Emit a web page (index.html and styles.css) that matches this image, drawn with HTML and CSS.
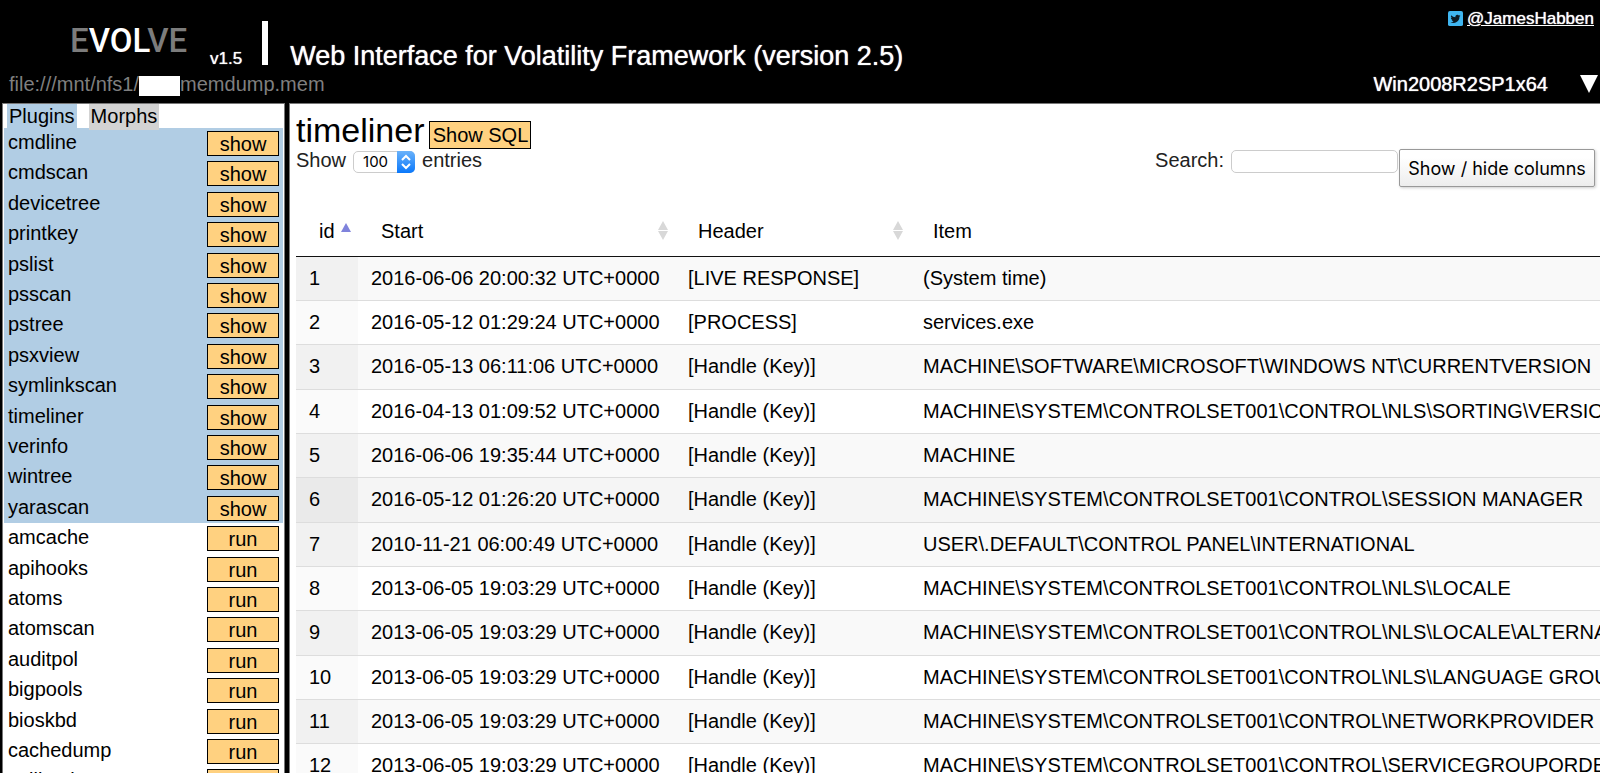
FILE: index.html
```
<!DOCTYPE html>
<html lang="en">
<head>
<meta charset="utf-8">
<title>Evolve</title>
<link rel="stylesheet" href="styles.css">
</head>
<body>
<header class="masthead">
  <div class="brand-row">
    <span class="logo"><span class="logo-dim">E</span>VOL<span class="logo-dim">VE</span></span>
    <span class="version">v1.5</span>
    <span class="divider"></span>
    <h1 class="tagline">Web Interface for Volatility Framework (version 2.5)</h1>
    <a class="author" href="#">
      <svg class="bird" viewBox="0 0 24 24" aria-hidden="true"><rect width="24" height="24" rx="3" fill="#3fb5f0"/><path fill="#0b1a24" d="M20 7.5a6.600 6.600 0 0 1-1.900.5 3.300 3.300 0 0 0 1.400-1.800 6.600 6.600 0 0 1-2.100.8 3.280 3.280 0 0 0-5.600 3A9.300 9.300 0 0 1 5.100 6.600a3.280 3.280 0 0 0 1 4.400 3.300 3.300 0 0 1-1.500-.4c0 1.600 1.100 3 2.600 3.300a3.300 3.300 0 0 1-1.500 0 3.300 3.300 0 0 0 3.100 2.300A6.600 6.600 0 0 1 4 17.500a9.300 9.300 0 0 0 14.300-8.300A6.600 6.600 0 0 0 20 7.500z"/></svg>
      <span class="handle">@JamesHabben</span>
    </a>
  </div>
  <div class="file-row">
    <span class="path">file:///mnt/nfs1/<span class="redacted"></span>memdump.mem</span>
    <button class="profile" type="button">Win2008R2SP1x64
      <svg class="caret" viewBox="0 0 18 18" aria-hidden="true"><path fill="#fff" d="M0 0h18L9 18z"/></svg>
    </button>
  </div>
</header>
<div class="workspace">
  <nav class="sidebar">
    <div class="tabs">
      <button class="tab tab-active" type="button">Plugins</button>
      <button class="tab" type="button">Morphs</button>
    </div>
    <ul class="plugins">
      <li class="plugin done"><span>cmdline</span><button class="action" type="button">show</button></li>
      <li class="plugin done"><span>cmdscan</span><button class="action" type="button">show</button></li>
      <li class="plugin done"><span>devicetree</span><button class="action" type="button">show</button></li>
      <li class="plugin done"><span>printkey</span><button class="action" type="button">show</button></li>
      <li class="plugin done"><span>pslist</span><button class="action" type="button">show</button></li>
      <li class="plugin done"><span>psscan</span><button class="action" type="button">show</button></li>
      <li class="plugin done"><span>pstree</span><button class="action" type="button">show</button></li>
      <li class="plugin done"><span>psxview</span><button class="action" type="button">show</button></li>
      <li class="plugin done"><span>symlinkscan</span><button class="action" type="button">show</button></li>
      <li class="plugin done"><span>timeliner</span><button class="action" type="button">show</button></li>
      <li class="plugin done"><span>verinfo</span><button class="action" type="button">show</button></li>
      <li class="plugin done"><span>wintree</span><button class="action" type="button">show</button></li>
      <li class="plugin done"><span>yarascan</span><button class="action" type="button">show</button></li>
      <li class="plugin"><span>amcache</span><button class="action" type="button">run</button></li>
      <li class="plugin"><span>apihooks</span><button class="action" type="button">run</button></li>
      <li class="plugin"><span>atoms</span><button class="action" type="button">run</button></li>
      <li class="plugin"><span>atomscan</span><button class="action" type="button">run</button></li>
      <li class="plugin"><span>auditpol</span><button class="action" type="button">run</button></li>
      <li class="plugin"><span>bigpools</span><button class="action" type="button">run</button></li>
      <li class="plugin"><span>bioskbd</span><button class="action" type="button">run</button></li>
      <li class="plugin"><span>cachedump</span><button class="action" type="button">run</button></li>
      <li class="plugin"><span>callbacks</span><button class="action" type="button">run</button></li>
    </ul>
  </nav>
  <main class="content">
    <div class="title-row">
      <h2 class="title">timeliner</h2>
      <button class="action sql" type="button">Show SQL</button>
    </div>
    <div class="toolbar">
      <label class="field" for="length">Show
        <span class="select-wrap">
          <select class="length" id="length"><option>100</option></select>
          <svg class="stepper" viewBox="0 0 18 22" aria-hidden="true"><path fill="none" stroke="#fff" stroke-width="2" d="M5 9l4-4 4 4M5 13l4 4 4-4"/></svg>
        </span>
        entries</label>
      <label class="field search-field" for="search">Search: <input class="search" id="search" type="text"></label>
      <button class="columns" type="button">Show / hide columns</button>
    </div>
    <table class="grid">
      <colgroup><col class="c-id"><col class="c-start"><col class="c-header"><col></colgroup>
      <thead>
        <tr>
          <th><span class="head head-id">id <svg class="sort sort-up" viewBox="0 0 10 9" aria-hidden="true"><path fill="#7f83dc" d="M5 0l5 9H0z"/></svg></span></th>
          <th><span class="head">Start <svg class="sort" viewBox="0 0 10 19" aria-hidden="true"><path fill="#d8d8d8" d="M5 0l5 9H0zM0 10h10l-5 9z"/></svg></span></th>
          <th><span class="head">Header <svg class="sort" viewBox="0 0 10 19" aria-hidden="true"><path fill="#d8d8d8" d="M5 0l5 9H0zM0 10h10l-5 9z"/></svg></span></th>
          <th><span class="head">Item</span></th>
        </tr>
      </thead>
      <tbody>
        <tr><td>1</td><td>2016-06-06 20:00:32 UTC+0000</td><td>[LIVE RESPONSE]</td><td>(System time)</td></tr>
        <tr><td>2</td><td>2016-05-12 01:29:24 UTC+0000</td><td>[PROCESS]</td><td>services.exe</td></tr>
        <tr><td>3</td><td>2016-05-13 06:11:06 UTC+0000</td><td>[Handle (Key)]</td><td>MACHINE\SOFTWARE\MICROSOFT\WINDOWS NT\CURRENTVERSION</td></tr>
        <tr><td>4</td><td>2016-04-13 01:09:52 UTC+0000</td><td>[Handle (Key)]</td><td>MACHINE\SYSTEM\CONTROLSET001\CONTROL\NLS\SORTING\VERSIONS</td></tr>
        <tr><td>5</td><td>2016-06-06 19:35:44 UTC+0000</td><td>[Handle (Key)]</td><td>MACHINE</td></tr>
        <tr class="hovered"><td>6</td><td>2016-05-12 01:26:20 UTC+0000</td><td>[Handle (Key)]</td><td>MACHINE\SYSTEM\CONTROLSET001\CONTROL\SESSION MANAGER</td></tr>
        <tr><td>7</td><td>2010-11-21 06:00:49 UTC+0000</td><td>[Handle (Key)]</td><td>USER\.DEFAULT\CONTROL PANEL\INTERNATIONAL</td></tr>
        <tr><td>8</td><td>2013-06-05 19:03:29 UTC+0000</td><td>[Handle (Key)]</td><td>MACHINE\SYSTEM\CONTROLSET001\CONTROL\NLS\LOCALE</td></tr>
        <tr><td>9</td><td>2013-06-05 19:03:29 UTC+0000</td><td>[Handle (Key)]</td><td>MACHINE\SYSTEM\CONTROLSET001\CONTROL\NLS\LOCALE\ALTERNATE SORTS</td></tr>
        <tr><td>10</td><td>2013-06-05 19:03:29 UTC+0000</td><td>[Handle (Key)]</td><td>MACHINE\SYSTEM\CONTROLSET001\CONTROL\NLS\LANGUAGE GROUPS</td></tr>
        <tr><td>11</td><td>2013-06-05 19:03:29 UTC+0000</td><td>[Handle (Key)]</td><td>MACHINE\SYSTEM\CONTROLSET001\CONTROL\NETWORKPROVIDER</td></tr>
        <tr><td>12</td><td>2013-06-05 19:03:29 UTC+0000</td><td>[Handle (Key)]</td><td>MACHINE\SYSTEM\CONTROLSET001\CONTROL\SERVICEGROUPORDER</td></tr>
      </tbody>
    </table>
  </main>
</div>
</body>
</html>
```
FILE: styles.css
```
* {
  box-sizing: border-box;
}

body {
  margin: 0;
  height: 100vh;
  display: flex;
  flex-direction: column;
  overflow: hidden;
  background: #000;
  color: #000;
  font: 20px/24px "Liberation Sans", Arial, sans-serif;
}

button,
input,
select {
  font: inherit;
  color: inherit;
}

/* Masthead */
.masthead {
  flex: none;
  color: #fff;
}

.brand-row {
  display: flex;
  height: 72px;
  padding: 0 6px 0 70px;
}

.logo {
  align-self: flex-end;
  width: 120px;
  padding-bottom: 10px;
  font: 500 33px/42px Roboto, sans-serif;
  white-space: nowrap;
}

.logo-dim {
  color: #7c7c7c;
}

.version {
  align-self: flex-end;
  margin-left: 20px;
  padding-bottom: 1px;
  font-size: 17px;
  text-shadow: 0 0 1px #fff;
}

.divider {
  width: 6px;
  height: 44px;
  margin: 21px 22px 0 20px;
  background: #fff;
}

.tagline {
  margin: 0;
  align-self: flex-end;
  font-size: 27px;
  line-height: 32px;
  font-weight: 400;
  text-shadow: 0 0 1px #fff;
}

.author {
  display: flex;
  gap: 4px;
  height: 24px;
  margin: 7px 0 0 auto;
  color: #fff;
  font-size: 17px;
  text-decoration: none;
  text-shadow: 0 0 1px #fff;
}

.bird {
  width: 15px;
  height: 15px;
  margin-top: 4px;
}

.handle {
  text-decoration: underline;
}

.file-row {
  display: flex;
  justify-content: space-between;
  height: 31px;
  padding: 0 2px 0 9px;
}

.path {
  display: flex;
  color: #7f7f7f;
}

.redacted {
  width: 41px;
  height: 20px;
  margin-top: 4px;
  background: #fff;
}

.profile {
  display: flex;
  align-items: center;
  gap: 32px;
  height: 24px;
  padding: 0;
  border: 0;
  background: none;
  text-shadow: 0 0 1px #fff;
}

.masthead .profile {
  color: #fff;
}

.caret {
  width: 18px;
  height: 18px;
}

/* Two-pane workspace */
.workspace {
  flex: 1;
  min-height: 0;
  display: flex;
  gap: 4px;
  padding-left: 2px;
}

.sidebar {
  flex: none;
  width: 283px;
  padding: 0 1px;
  border: 1px solid #777;
  border-bottom: 0;
  background: #fff;
  overflow: hidden;
}

.tabs {
  display: flex;
  align-items: flex-start;
  gap: 12px;
  height: 24px;
  padding-left: 3px;
}

.tab {
  height: 26px;
  padding: 0 2px 2px;
  border: 0;
  background: #d3d3d3;
}

.tab-active {
  background: #b1cde4;
}

.plugins {
  margin: 0;
  padding: 0;
  list-style: none;
}

.plugin {
  display: flex;
  justify-content: space-between;
  height: 30px;
  padding: 2px 4px 0 4px;
}

.plugin:nth-child(5n + 2),
.plugin:nth-child(5n + 4) {
  height: 31px;
}

.done {
  background: #b1cde4;
}

.action {
  width: 72px;
  height: 25px;
  margin-top: 1px;
  padding: 0;
  border: 1px solid #000;
  background: #ffd180;
  line-height: 22px;
}

/* Result pane */
.content {
  flex: 1;
  min-width: 0;
  padding-left: 6px;
  border: 1px solid #777;
  border-width: 1px 0 0 1px;
  background: #fff;
  overflow: hidden;
}

.title-row {
  display: flex;
  height: 45px;
  padding-top: 6px;
}

.title {
  margin: 0;
  font-size: 34px;
  line-height: 40px;
  font-weight: 400;
}

.sql {
  width: 102px;
  height: 28px;
  margin: 11px 0 0 5px;
}

.toolbar {
  display: flex;
  align-items: flex-start;
  height: 55px;
  padding-right: 5px;
}

.field {
  display: flex;
  gap: 7px;
  color: #222;
  line-height: 22px;
}

.select-wrap {
  display: grid;
}

.length {
  grid-area: 1 / 1;
  appearance: none;
  width: 62px;
  height: 22px;
  padding: 0 0 0 9px;
  border: 1px solid #ccc;
  border-radius: 5px;
  background: #fff;
  color: #000;
  font: 15px/20px Inter, sans-serif;
}

.stepper {
  grid-area: 1 / 1;
  justify-self: end;
  width: 18px;
  height: 22px;
  border-radius: 0 5px 5px 0;
  background: linear-gradient(#6ab2fa, #0a78fb);
  pointer-events: none;
}

.select-wrap {
  margin-top: 2px;
}

.search {
  margin-top: 1px;
}

.search-field {
  margin-left: auto;
}

.search {
  width: 167px;
  height: 23px;
  padding: 0 6px;
  border: 1px solid #ccc;
  border-radius: 5px;
  background: #fff;
}

.columns {
  width: 196px;
  height: 38px;
  margin-left: 1px;
  padding: 2px 0 0;
  border: 1px solid #999;
  border-radius: 2px;
  background: linear-gradient(#fff 20%, #ededed);
  box-shadow: 1px 1px 3px #ccc;
  font: 18px/24px Inter, sans-serif;
}

.grid {
  width: 100%;
  table-layout: fixed;
  border-collapse: separate;
  border-spacing: 0;
}

.c-id {
  width: 62px;
}

.c-start {
  width: 317px;
}

.c-header {
  width: 235px;
}

.grid th {
  height: 53px;
  padding: 1px 7px 0 23px;
  border-bottom: 1px solid #111;
  font-weight: 400;
  text-align: left;
}

.head {
  display: flex;
  align-items: center;
  justify-content: space-between;
}

.sort {
  width: 10px;
  height: 19px;
}

.sort-up {
  height: 9px;
  margin-bottom: 6px;
}

.grid td {
  height: 44px;
  padding: 0 0 2px 13px;
  border-bottom: 1px solid #ddd;
  white-space: nowrap;
  overflow: hidden;
}

.grid tr:nth-child(3n) td {
  height: 45px;
}

.grid td:first-child {
  background: #fafafa;
}

.grid tbody tr:nth-child(odd) {
  background: #f9f9f9;
}

.grid tbody tr:nth-child(odd) td:first-child {
  background: #f1f1f1;
}

.grid tbody .hovered {
  background: #f5f5f5;
}

.grid tbody .hovered td:first-child {
  background: #eaeaea;
}
```
